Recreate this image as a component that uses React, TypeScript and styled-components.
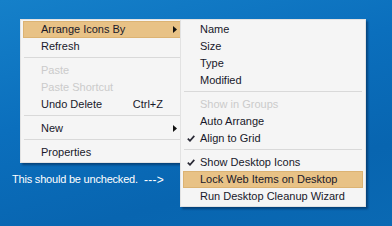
import React from "react";
import styled, { createGlobalStyle } from "styled-components";

const Global = createGlobalStyle`
  html, body { margin: 0; padding: 0; }
  body { font-family: "Liberation Sans", Arial, sans-serif; }
`;

const Desktop = styled.div`
  position: relative;
  width: 392px;
  height: 226px;
  overflow: hidden;
  background: linear-gradient(165deg, #1580c9 0%, #0b6fbd 40%, #0865b0 75%, #0a69b3 100%);
`;

const Menu = styled.div<{ $left: number; $top: number; $width: number }>`
  position: absolute;
  left: ${(p) => p.$left}px;
  top: ${(p) => p.$top}px;
  width: ${(p) => p.$width}px;
  box-sizing: border-box;
  background: #f5f5f5;
  border: 1px solid #e2e2e2;
  padding: 1px 2px;
  box-shadow: 2px 2px 2px rgba(0, 20, 50, 0.45);
  display: flex;
  flex-direction: column;
`;

const Item = styled.div<{ $active?: boolean; $disabled?: boolean; $indent: number }>`
  position: relative;
  height: 17px;
  box-sizing: border-box;
  display: flex;
  align-items: center;
  padding-left: ${(p) => p.$indent}px;
  padding-right: 4px;
  font-size: 11px;
  line-height: 17px;
  white-space: nowrap;
  color: ${(p) => (p.$disabled ? "#cbcbcb" : "#18182a")};
  background: ${(p) => (p.$active ? "#e8c286" : "transparent")};
  box-shadow: ${(p) => (p.$active ? "inset 0 0 0 1px #dcb373" : "none")};
`;

const Label = styled.span`
  flex: 1;
`;

const Shortcut = styled.span`
  margin-right: 14px;
`;

const CheckBox = styled.span`
  position: absolute;
  left: 4px;
  top: 5px;
  width: 8px;
  height: 7px;
  display: flex;
`;

const Separator = styled.div<{ $inset: number }>`
  height: 7px;
  box-sizing: border-box;
  padding-top: 2px;
  margin: 0 ${(p) => p.$inset}px 0 1px;
  &::before {
    content: "";
    display: block;
    height: 1px;
    background: #d9d9d9;
  }
`;

const Note = styled.div`
  position: absolute;
  left: 12px;
  top: 173px;
  display: flex;
  gap: 6px;
  color: #ffffff;
  font-size: 11px;
  white-space: pre;
`;

const NoteText = styled.span`
  letter-spacing: -0.2px;
`;

const NoteArrow = styled.span`
  letter-spacing: 0.3px;
  font-size: 12px;
`;

const Arrow = () => (
  <svg width="4" height="7" viewBox="0 0 4 7">
    <polygon points="0,0 4,3.5 0,7" fill="#111" />
  </svg>
);

const Check = () => (
  <svg width="8" height="7" viewBox="0 0 8 7">
    <path d="M0.8 3.6 L3 5.8 L7.3 0.9" fill="none" stroke="#2a2a36" strokeWidth="1.7" />
  </svg>
);

type Entry =
  | { sep: true }
  | { label: string; active?: boolean; disabled?: boolean; sub?: boolean; shortcut?: string; checked?: boolean };

const mainItems: Entry[] = [
  { label: "Arrange Icons By", active: true, sub: true },
  { label: "Refresh" },
  { sep: true },
  { label: "Paste", disabled: true },
  { label: "Paste Shortcut", disabled: true },
  { label: "Undo Delete", shortcut: "Ctrl+Z" },
  { sep: true },
  { label: "New", sub: true },
  { sep: true },
  { label: "Properties" },
];

const subItems: Entry[] = [
  { label: "Name" },
  { label: "Size" },
  { label: "Type" },
  { label: "Modified" },
  { sep: true },
  { label: "Show in Groups", disabled: true },
  { label: "Auto Arrange" },
  { label: "Align to Grid", checked: true },
  { sep: true },
  { label: "Show Desktop Icons", checked: true },
  { label: "Lock Web Items on Desktop", active: true },
  { label: "Run Desktop Cleanup Wizard" },
];

const renderItems = (items: Entry[], indent: number, sepInset: number) =>
  items.map((e, i) =>
    "sep" in e ? (
      <Separator key={i} $inset={sepInset} />
    ) : (
      <Item key={i} $indent={indent} $active={e.active} $disabled={e.disabled}>
        {e.checked && (
          <CheckBox>
            <Check />
          </CheckBox>
        )}
        <Label>{e.label}</Label>
        {e.shortcut && <Shortcut>{e.shortcut}</Shortcut>}
        {e.sub && <Arrow />}
      </Item>
    )
  );

export default function App() {
  return (
    <>
      <Global />
      <Desktop>
        <Menu $left={20} $top={19} $width={164}>
          {renderItems(mainItems, 18, 0)}
        </Menu>
        <Menu $left={180} $top={19} $width={186}>
          {renderItems(subItems, 17, 1)}
        </Menu>
        <Note>
          <NoteText>This should be unchecked.</NoteText>
          <NoteArrow>---&gt;</NoteArrow>
        </Note>
      </Desktop>
    </>
  );
}
